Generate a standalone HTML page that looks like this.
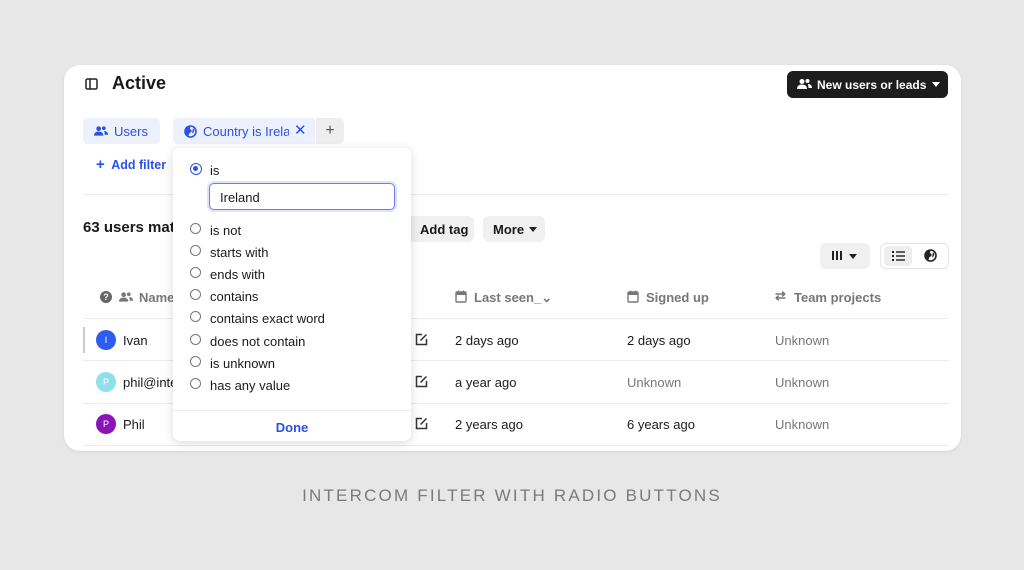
<!DOCTYPE html>
<html><head><meta charset="utf-8"><style>
*{box-sizing:border-box;margin:0;padding:0}
body{width:1024px;height:570px;background:#e7e7e7;font-family:"Liberation Sans",sans-serif;position:relative;overflow:hidden;color:#1a1a1a}
.a{position:absolute}
.card{left:64px;top:65px;width:897px;height:386px;background:#fff;border-radius:16px;box-shadow:0 1px 3px rgba(0,0,0,.08)}
.t{font-size:13px;white-space:nowrap}
.line{height:1px;background:#ececec}
.radio{width:11px;height:11px;border:1px solid #777;border-radius:50%}
.gray{color:#777}
.blue{color:#2b50e8}
svg{display:block}
</style></head><body>
<div class="a card"></div>
<svg class="a" style="left:85px;top:78px" width="13" height="12" viewBox="0 0 13 12"><rect x="1" y="1" width="11" height="10" rx="1.5" fill="none" stroke="#222" stroke-width="1.5"/><line x1="5" y1="1" x2="5" y2="11" stroke="#222" stroke-width="1.5"/></svg>
<div class="a" style="left:112px;top:73px;font-size:18px;font-weight:bold">Active</div>
<div class="a" style="left:787px;top:71px;width:161px;height:27px;background:#1d1d1d;border-radius:6px;color:#fff;font-size:12px;font-weight:bold;padding:7px 0 0 30px">New users or leads</div>
<svg class="a" style="left:797px;top:78px" width="15" height="12" viewBox="0 0 15 12" fill="#fff"><circle cx="5" cy="3.5" r="2.5"/><path d="M0 11c0-3 2-4.5 5-4.5s5 1.5 5 4.5z"/><circle cx="10.5" cy="3" r="2"/><path d="M11 6c2 0 4 1 4 4h-3.5c0-1.5-.5-3-.5-4z"/></svg>
<div class="a" style="left:932px;top:82px;border:4px solid transparent;border-top:5px solid #fff;border-bottom:0"></div>
<div class="a" style="left:83px;top:118px;width:77px;height:26px;background:#edf0fd;border-radius:5px"></div>
<svg class="a" style="left:94px;top:125px" width="14" height="12" viewBox="0 0 15 12" fill="#2b50e8"><circle cx="5" cy="3.5" r="2.5"/><path d="M0 11c0-3 2-4.5 5-4.5s5 1.5 5 4.5z"/><circle cx="10.5" cy="3" r="2"/><path d="M11 6c2 0 4 1 4 4h-3.5c0-1.5-.5-3-.5-4z"/></svg>
<div class="a t blue" style="left:114px;top:124px">Users</div>
<div class="a" style="left:173px;top:118px;width:142px;height:26px;background:#edf0fd;border-radius:5px 0 0 5px"></div>
<div class="a" style="left:316px;top:118px;width:28px;height:26px;background:#eeeeee;border-radius:0 5px 5px 0;color:#555;font-size:16px;text-align:center;line-height:26px">+</div>
<svg class="a" style="left:184px;top:125px" width="13" height="13" viewBox="0 0 13 13"><circle cx="6.5" cy="6.5" r="5.5" fill="none" stroke="#2b50e8" stroke-width="1.6"/><path d="M6.5 1.5a5 5 0 0 0-2 9.5l1-3 2-1 0-2-1.5-1z" fill="#2b50e8"/><path d="M9 3l1.5 2-1 2.5-1.5 1z" fill="#2b50e8"/></svg>
<div class="a t blue" style="left:203px;top:124px;width:86px;overflow:hidden">Country is Ireland</div>
<div class="a blue" style="left:294px;top:121px;font-size:15px">✕</div>
<div class="a blue" style="left:96px;top:156px;font-size:12.5px;font-weight:bold;white-space:nowrap"><span style="font-size:15px">+</span>&nbsp; Add filter</div>
<div class="a line" style="left:83px;top:194px;width:866px"></div>
<div class="a" style="left:83px;top:219px;font-size:15px;font-weight:bold">63 users matching</div>
<div class="a" style="left:380px;top:216px;width:94px;height:26px;background:#f0f0f0;border-radius:6px"></div>
<div class="a t" style="left:420px;top:222px;font-weight:bold">Add tag</div>
<div class="a" style="left:483px;top:216px;width:62px;height:26px;background:#f0f0f0;border-radius:6px"></div>
<div class="a t" style="left:493px;top:222px;font-weight:bold">More</div>
<div class="a" style="left:529px;top:227px;border:4px solid transparent;border-top:5px solid #222;border-bottom:0"></div>
<div class="a" style="left:820px;top:243px;width:50px;height:26px;background:#f0f0f0;border-radius:6px"></div>
<div class="a" style="left:832px;top:251px;width:10px;height:9px;border-left:2.5px solid #222;border-right:2.5px solid #222"><div style="margin-left:1.5px;width:2.5px;height:9px;background:#222"></div></div>
<div class="a" style="left:849px;top:254px;border:4px solid transparent;border-top:5px solid #222;border-bottom:0"></div>
<div class="a" style="left:880px;top:243px;width:69px;height:26px;border:1px solid #e5e5e5;border-radius:6px"></div>
<div class="a" style="left:884px;top:246px;width:28px;height:20px;background:#eeeeee;border-radius:4px"></div>
<svg class="a" style="left:892px;top:251px" width="13" height="10" viewBox="0 0 13 10" fill="#222"><rect x="0" y="0" width="2" height="2"/><rect x="4" y="0.3" width="9" height="1.4"/><rect x="0" y="4" width="2" height="2"/><rect x="4" y="4.3" width="9" height="1.4"/><rect x="0" y="8" width="2" height="2"/><rect x="4" y="8.3" width="9" height="1.4"/></svg>
<svg class="a" style="left:924px;top:249px" width="13" height="13" viewBox="0 0 13 13"><circle cx="6.5" cy="6.5" r="5.5" fill="none" stroke="#222" stroke-width="1.6"/><path d="M6.5 1.5a5 5 0 0 0-2 9.5l1-3 2-1 0-2-1.5-1z" fill="#222"/><path d="M9 3l1.5 2-1 2.5-1.5 1z" fill="#222"/></svg>
<div class="a" style="left:100px;top:291px;width:12px;height:12px;border-radius:50%;background:#666;color:#fff;font-size:9px;font-weight:bold;text-align:center;line-height:12px">?</div>
<svg class="a" style="left:119px;top:291px" width="14" height="12" viewBox="0 0 15 12" fill="#777"><circle cx="5" cy="3.5" r="2.5"/><path d="M0 11c0-3 2-4.5 5-4.5s5 1.5 5 4.5z"/><circle cx="10.5" cy="3" r="2"/><path d="M11 6c2 0 4 1 4 4h-3.5c0-1.5-.5-3-.5-4z"/></svg>
<div class="a t gray" style="left:139px;top:290px;font-weight:bold">Name</div>
<svg class="a" style="left:455px;top:290px" width="12" height="13" viewBox="0 0 12 13"><rect x="1" y="2" width="10" height="10" rx="1" fill="none" stroke="#777" stroke-width="1.4"/><rect x="1" y="2" width="10" height="3" fill="#777"/><rect x="3" y="0.5" width="1.2" height="2.5" fill="#777"/><rect x="7.8" y="0.5" width="1.2" height="2.5" fill="#777"/></svg>
<div class="a t gray" style="left:474px;top:290px;font-weight:bold">Last seen_⌄</div>
<svg class="a" style="left:627px;top:290px" width="12" height="13" viewBox="0 0 12 13"><rect x="1" y="2" width="10" height="10" rx="1" fill="none" stroke="#777" stroke-width="1.4"/><rect x="1" y="2" width="10" height="3" fill="#777"/><rect x="3" y="0.5" width="1.2" height="2.5" fill="#777"/><rect x="7.8" y="0.5" width="1.2" height="2.5" fill="#777"/></svg>
<div class="a t gray" style="left:646px;top:290px;font-weight:bold">Signed up</div>
<div class="a gray" style="left:775px;top:288px;font-size:13px;font-weight:bold">⇄</div>
<div class="a t gray" style="left:794px;top:290px;font-weight:bold">Team projects</div>
<div class="a line" style="left:83px;top:318px;width:866px"></div>
<div class="a" style="left:83px;top:327px;width:2px;height:26px;background:#ccc"></div>
<div class="a" style="left:96px;top:330px;width:20px;height:20px;border-radius:50%;background:#2f5cf0;color:#fff;font-size:9px;text-align:center;line-height:20px">I</div>
<div class="a t" style="left:123px;top:333px">Ivan</div>
<div class="a t" style="left:455px;top:333px">2 days ago</div>
<div class="a t" style="left:627px;top:333px">2 days ago</div>
<div class="a t gray" style="left:775px;top:333px">Unknown</div>
<div class="a line" style="left:83px;top:360px;width:866px"></div>
<div class="a" style="left:96px;top:372px;width:20px;height:20px;border-radius:50%;background:#8fe0ea;color:#fff;font-size:9px;text-align:center;line-height:20px">P</div>
<div class="a t" style="left:123px;top:375px">phil@intercom.io</div>
<div class="a t" style="left:455px;top:375px">a year ago</div>
<div class="a t gray" style="left:627px;top:375px">Unknown</div>
<div class="a t gray" style="left:775px;top:375px">Unknown</div>
<div class="a line" style="left:83px;top:403px;width:866px"></div>
<div class="a" style="left:96px;top:414px;width:20px;height:20px;border-radius:50%;background:#8a14b8;color:#fff;font-size:9px;text-align:center;line-height:20px">P</div>
<div class="a t" style="left:123px;top:417px">Phil</div>
<div class="a t" style="left:455px;top:417px">2 years ago</div>
<div class="a t" style="left:627px;top:417px">6 years ago</div>
<div class="a t gray" style="left:775px;top:417px">Unknown</div>
<div class="a line" style="left:83px;top:445px;width:866px"></div>
<svg class="a" style="left:415px;top:333px" width="13" height="13" viewBox="0 0 13 13"><path d="M7 1.5H1.5v10h10V6" fill="none" stroke="#333" stroke-width="1.5"/><path d="M5.5 7.5l6-6" stroke="#333" stroke-width="1.5"/></svg>
<svg class="a" style="left:415px;top:375px" width="13" height="13" viewBox="0 0 13 13"><path d="M7 1.5H1.5v10h10V6" fill="none" stroke="#333" stroke-width="1.5"/><path d="M5.5 7.5l6-6" stroke="#333" stroke-width="1.5"/></svg>
<svg class="a" style="left:415px;top:417px" width="13" height="13" viewBox="0 0 13 13"><path d="M7 1.5H1.5v10h10V6" fill="none" stroke="#333" stroke-width="1.5"/><path d="M5.5 7.5l6-6" stroke="#333" stroke-width="1.5"/></svg>
<div class="a" style="left:173px;top:148px;width:238px;height:293px;background:#fff;border-radius:7px;box-shadow:0 2px 10px rgba(0,0,0,.15)"></div>
<div class="a" style="left:190px;top:163px;width:12px;height:12px;border-radius:50%;border:1.5px solid #2b50e8;padding:2px"><div style="width:5px;height:5px;border-radius:50%;background:#2b50e8"></div></div>
<div class="a t" style="left:210px;top:163px">is</div>
<div class="a" style="left:209px;top:183px;width:186px;height:27px;border:1.5px solid #6b7ef0;border-radius:5px;box-shadow:0 0 0 2px #dfe3fc;font-size:13px;padding:6px 0 0 10px">Ireland</div>
<div class="a radio" style="left:190px;top:223px"></div><div class="a t" style="left:210px;top:223px">is not</div>
<div class="a radio" style="left:190px;top:245px"></div><div class="a t" style="left:210px;top:245px">starts with</div>
<div class="a radio" style="left:190px;top:267px"></div><div class="a t" style="left:210px;top:267px">ends with</div>
<div class="a radio" style="left:190px;top:289px"></div><div class="a t" style="left:210px;top:289px">contains</div>
<div class="a radio" style="left:190px;top:311px"></div><div class="a t" style="left:210px;top:311px">contains exact word</div>
<div class="a radio" style="left:190px;top:334px"></div><div class="a t" style="left:210px;top:334px">does not contain</div>
<div class="a radio" style="left:190px;top:356px"></div><div class="a t" style="left:210px;top:356px">is unknown</div>
<div class="a radio" style="left:190px;top:378px"></div><div class="a t" style="left:210px;top:378px">has any value</div>
<div class="a line" style="left:173px;top:410px;width:238px"></div>
<div class="a t blue" style="left:173px;top:420px;width:238px;text-align:center;font-weight:bold">Done</div>
<div class="a" style="left:0;top:486px;width:1024px;text-align:center;font-size:17px;letter-spacing:2.2px;color:#7a7a7a">INTERCOM FILTER WITH RADIO BUTTONS</div>
</body></html>
